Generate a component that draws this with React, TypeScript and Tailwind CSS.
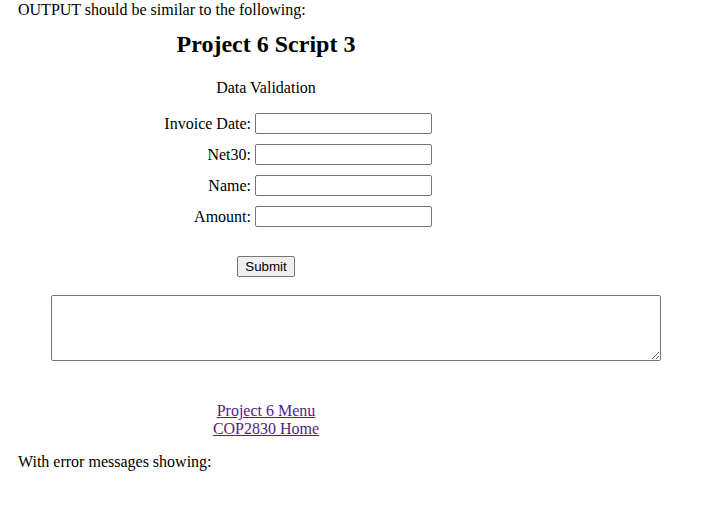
import React from 'react';

const fields = ['Invoice Date', 'Net30', 'Name', 'Amount'];

export default function App() {
  return (
    <div className="min-h-[507px] bg-white text-black px-[18px] text-[16px] leading-[18px]" style={{ fontFamily: '"Liberation Serif", "Times New Roman", serif' }}>
      <p className="pt-[1px]">OUTPUT should be similar to the following:</p>

      <div className="w-[496px] flex flex-col items-center">
        <h1 className="mt-[11px] text-[24px] leading-[28px] font-bold">Project 6 Script 3</h1>
        <p className="mt-[21px]">Data Validation</p>
      </div>

      <form className="mt-[16px] flex flex-col gap-[10px]" onSubmit={(e) => e.preventDefault()}>
        {fields.map((f) => (
          <div key={f} className="flex items-center">
            <label className="w-[237px] text-right pr-[4px]">{f}:</label>
            <input
              type="text"
              className="w-[177px] h-[21px] border border-[#767676] rounded-[2px] bg-white px-[2px] text-[13px]"
            />
          </div>
        ))}
        <div className="w-[496px] flex justify-center mt-[19px]">
          <button
            type="submit"
            className="w-[58px] h-[21px] border border-[#767676] rounded-[2px] bg-[#efefef] text-[13.33px] leading-[15px]"
            style={{ fontFamily: '"Liberation Sans", Arial, sans-serif' }}
          >
            Submit
          </button>
        </div>
        <textarea className="ml-[33px] mt-[8px] w-[610px] h-[66px] border border-[#767676] rounded-[2px] bg-white" />
      </form>

      <div className="w-[496px] flex flex-col items-center mt-[41px]">
        <a href="#" className="text-[#551a8b] underline">Project 6 Menu</a>
        <a href="#" className="text-[#551a8b] underline">COP2830 Home</a>
      </div>

      <p className="mt-[15px]">With error messages showing:</p>
    </div>
  );
}
